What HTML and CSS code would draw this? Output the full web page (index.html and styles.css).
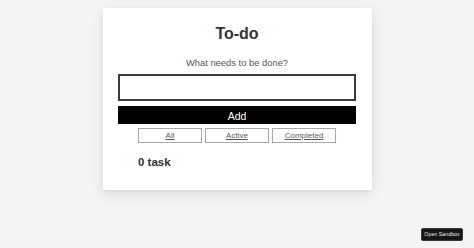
FILE: index.html
```html
<!DOCTYPE html>
<html lang="en">
<head>
<meta charset="utf-8">
<title>To-do</title>
<link rel="stylesheet" href="styles.css">
</head>
<body>
<main class="card">
  <h1 class="title">To-do</h1>
  <form class="new-task">
    <label class="prompt" for="new-todo">What needs to be done?</label>
    <input id="new-todo" class="task-input" type="text" autocomplete="off">
    <button type="button" class="add-btn">Add</button>
  </form>
  <div class="filters">
    <button type="button" class="filter-btn"><span>All</span></button>
    <button type="button" class="filter-btn"><span>Active</span></button>
    <button type="button" class="filter-btn"><span>Completed</span></button>
  </div>
  <h2 class="count">0 task</h2>
</main>
<a class="sandbox-btn" href="#">Open Sandbox</a>
</body>
</html>
```
FILE: styles.css
```css
html, body {
  margin: 0;
  padding: 0;
}
body {
  background: #f4f4f4;
  font-family: "Liberation Sans", Arial, Helvetica, sans-serif;
  color: #333;
  min-height: 248px;
}
.card {
  box-sizing: border-box;
  width: 269px;
  height: 182px;
  margin: 8px auto 0;
  background: #fff;
  padding: 17px 15.5px 0;
  box-shadow: 0 4px 14px rgba(0, 0, 0, 0.10), 0 1px 3px rgba(0, 0, 0, 0.06);
  display: flex;
  flex-direction: column;
}
.title {
  margin: 0;
  font-size: 16px;
  line-height: 18px;
  font-weight: bold;
  text-align: center;
  color: #333;
}
.new-task {
  display: flex;
  flex-direction: column;
  margin: 14px 0 0;
}
.prompt {
  font-size: 9.4px;
  line-height: 12px;
  text-align: center;
  color: #555;
}
.task-input {
  box-sizing: border-box;
  margin: 5px 0 0;
  width: 100%;
  height: 27px;
  border: 2px solid #3c3c3c;
  border-radius: 0;
  padding: 0 6px;
  background: #fff;
  outline: none;
}
.add-btn {
  box-sizing: border-box;
  margin: 5px 0 0;
  height: 18px;
  width: 100%;
  border: none;
  background: #000;
  color: #fff;
  font-family: inherit;
  font-size: 10.5px;
  line-height: 18px;
  padding: 1px 0 0;
}
.filters {
  display: flex;
  justify-content: center;
  gap: 3px;
  margin-top: 4px;
}
.filter-btn {
  box-sizing: border-box;
  width: 64px;
  height: 15px;
  padding: 0;
  background: #fff;
  border: 1px solid #a8a8a8;
  border-radius: 0;
  color: #5a5a5a;
  font-family: inherit;
  font-size: 8px;
  line-height: 13px;
}
.filter-btn span {
  text-decoration: underline;
}
.count {
  margin: 12px 0 0 20px;
  font-size: 11.5px;
  line-height: 14px;
  font-weight: bold;
  color: #333;
}
.sandbox-btn {
  position: fixed;
  right: 11px;
  bottom: 7px;
  box-sizing: border-box;
  width: 42px;
  height: 13px;
  background: #161616;
  border: 1px solid #3a3a3a;
  border-radius: 2px;
  color: #e8e8e8;
  font-size: 5.3px;
  line-height: 11px;
  text-align: center;
  text-decoration: none;
  white-space: nowrap;
}
```
